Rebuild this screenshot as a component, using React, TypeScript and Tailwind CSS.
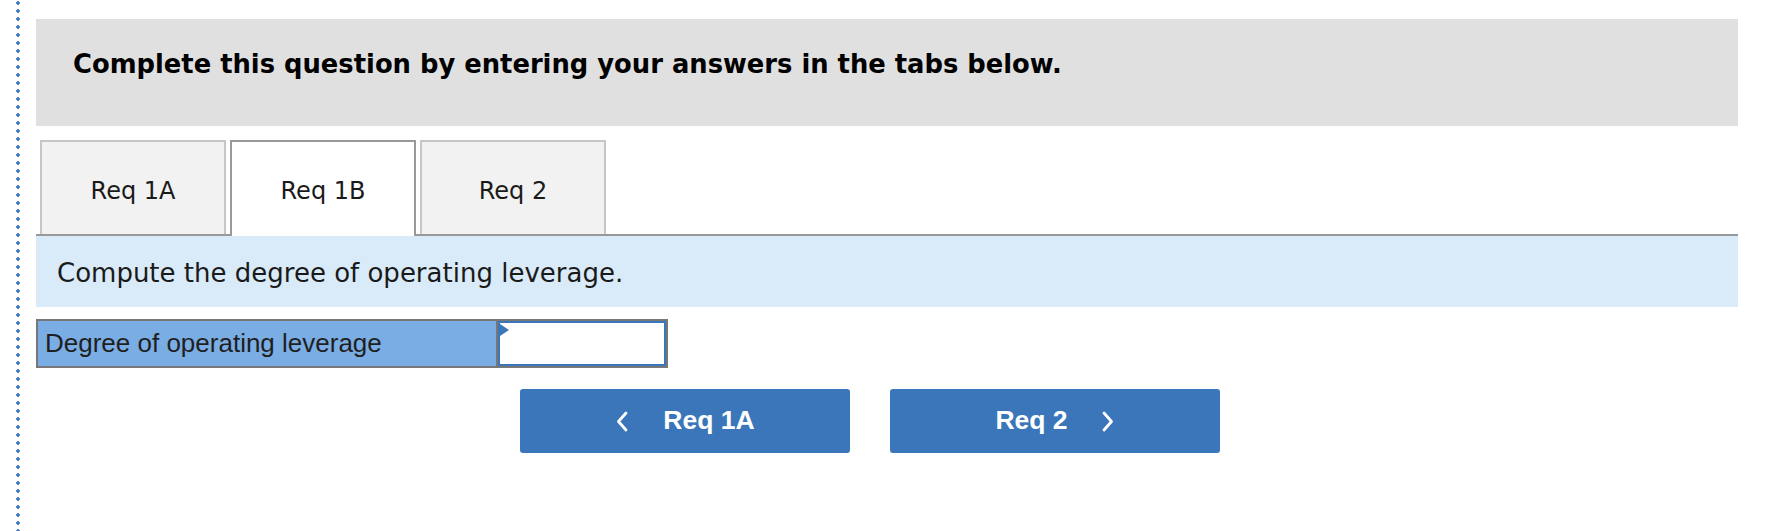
import React from "react";

const Chevron = ({ dir }: { dir: "left" | "right" }) => (
  <svg width="14" height="21" viewBox="0 0 14 21" fill="none">
    {dir === "left" ? (
      <polyline points="11,2 3.5,10.5 11,19" stroke="#ffffff" strokeWidth="2.8" strokeLinecap="round" strokeLinejoin="round" />
    ) : (
      <polyline points="3,2 10.5,10.5 3,19" stroke="#ffffff" strokeWidth="2.8" strokeLinecap="round" strokeLinejoin="round" />
    )}
  </svg>
);

export default function App() {
  const tabs = [
    { label: "Req 1A", active: false },
    { label: "Req 1B", active: true },
    { label: "Req 2", active: false },
  ];
  return (
    <div className="flex h-[531px] w-full bg-white overflow-hidden">
      <div className="ml-[16px] w-[4px] h-full shrink-0 bg-[radial-gradient(circle,#3a78c4_1.5px,transparent_2px)] bg-[length:4px_8px] bg-[position:0px_-1px]" />
      <div className="ml-[16px] w-[1702px] flex flex-col">
        <div className="mt-[19px] h-[107px] bg-[#e0e0e0] pl-[37px] pt-[30px]">
          <p className="font-['DejaVu_Sans',sans-serif] font-bold text-[25.8px] leading-[30px] text-black">
            Complete this question by entering your answers in the tabs below.
          </p>
        </div>
        <div className="mt-[14px] flex items-end gap-[4px] pl-[4px] border-b-2 border-[#999999] h-[96px]">
          {tabs.map((t) =>
            t.active ? (
              <div
                key={t.label}
                className="w-[186px] h-[96px] -mb-[2px] bg-white border-2 border-b-0 border-[#999999] flex items-center justify-center pt-[4px] font-['DejaVu_Sans',sans-serif] text-[24px] text-[#1a1a1a]"
              >
                {t.label}
              </div>
            ) : (
              <div
                key={t.label}
                className="w-[186px] h-[94px] bg-[#f2f2f2] border-2 border-b-0 border-[#c6c6c6] flex items-center justify-center pt-[6px] font-['DejaVu_Sans',sans-serif] text-[24px] text-[#1a1a1a]"
              >
                {t.label}
              </div>
            )
          )}
        </div>
        <div className="h-[71px] bg-[#d9eaf8] flex items-center pl-[21px]">
          <p className="font-['DejaVu_Sans',sans-serif] text-[26px] text-[#1a1a1a] pt-[3px]">
            Compute the degree of operating leverage.
          </p>
        </div>
        <div className="mt-[12px] w-[632px] h-[49px] border-2 border-[#777777] flex">
          <div className="w-[460px] h-full bg-[#7aade3] border-r-2 border-[#777777] flex items-center pl-[7px] font-['Liberation_Sans',Arial,sans-serif] text-[26px] text-[#1f1f1f]">
            Degree of operating leverage
          </div>
          <div className="relative flex-1 h-full border-2 border-[#3b75ba] bg-white">
            <div className="absolute left-0 top-[1px] w-0 h-0 border-t-[6px] border-b-[6px] border-l-[9px] border-t-transparent border-b-transparent border-l-[#3b75ba]" />
          </div>
        </div>
        <div className="mt-[21px] ml-[484px] flex gap-[40px]">
          <button className="w-[330px] h-[64px] rounded-[3px] bg-[#3a76b9] flex items-center justify-center gap-[34px] font-['Liberation_Sans',Arial,sans-serif] font-bold text-[26.5px] text-white">
            <Chevron dir="left" />
            <span>Req 1A</span>
          </button>
          <button className="w-[330px] h-[64px] rounded-[3px] bg-[#3a76b9] flex items-center justify-center gap-[33px] font-['Liberation_Sans',Arial,sans-serif] font-bold text-[26.5px] text-white">
            <span>Req 2</span>
            <Chevron dir="right" />
          </button>
        </div>
      </div>
    </div>
  );
}
